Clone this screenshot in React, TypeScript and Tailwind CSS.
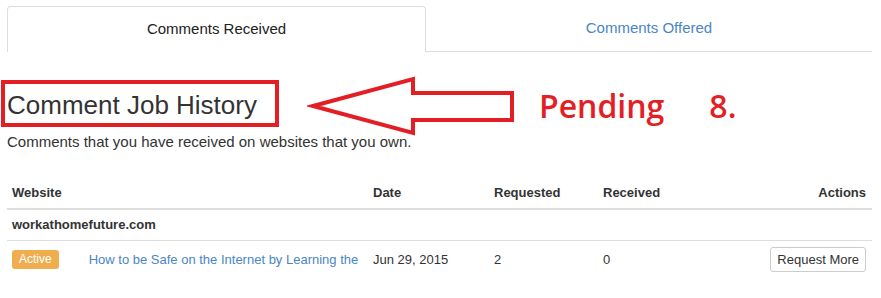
import React from "react";

const FONT = { fontFamily: '"Liberation Sans", Arial, sans-serif' };

function Tabs() {
  return (
    <div className="flex pt-[6px] text-[15px]">
      <div className="flex h-[46px] w-[419px] items-center justify-center rounded-t-[4px] border border-b-0 border-[#dddddd] bg-white text-[#222222]">
        Comments Received
      </div>
      <div className="flex h-[46px] w-[446px] items-center justify-center border-b border-[#dddddd] text-[#4a86c5]">
        Comments Offered
      </div>
    </div>
  );
}

function Annotations() {
  return (
    <>
      <div className="pointer-events-none absolute left-[-6px] top-[28px] h-[47px] w-[278px] border-[4px] border-[#e31e24]" />
      <svg
        className="pointer-events-none absolute left-[300px] top-[22px]"
        width="220"
        height="64"
        viewBox="0 0 220 64"
        fill="none"
      >
        <path
          d="M6 32 L106 5 L106 19 L205 19 L205 46 L106 46 L106 59 Z"
          stroke="#e31e24"
          strokeWidth="4"
          strokeLinejoin="miter"
        />
      </svg>
      <div
        className="absolute left-[532px] top-[34px] text-[32px] font-semibold leading-[40px] text-[#e31e24]"
        style={{ fontFamily: '"Open Sans", sans-serif' }}
      >
        Pending<span className="ml-[45px]">8.</span>
      </div>
    </>
  );
}

function HistoryTable() {
  const cols = "grid grid-cols-[361px_121px_109px_1fr_1fr]";
  return (
    <div className="mt-[26px] text-[13px] text-[#333333]">
      <div className={`${cols} border-b-2 border-[#dddddd] font-bold`}>
        <div className="px-[5px] py-[5px] leading-[20px]">Website</div>
        <div className="px-[5px] py-[5px] leading-[20px]">Date</div>
        <div className="px-[5px] py-[5px] leading-[20px]">Requested</div>
        <div className="px-[5px] py-[5px] leading-[20px]">Received</div>
        <div className="px-[6px] py-[5px] text-right leading-[20px]">Actions</div>
      </div>
      <div className="border-b border-[#dddddd] px-[5px] py-[5px] font-bold leading-[20px]">
        workathomefuture.com
      </div>
      <div className={`${cols} items-center py-[6px]`}>
        <div className="flex items-center px-[5px]">
          <span className="rounded-[3px] bg-[#f0ad4e] px-[7px] text-[12px] leading-[19px] text-white">
            Active
          </span>
          <span className="ml-[30px] whitespace-nowrap text-[#4a86c5]">
            How to be Safe on the Internet by Learning the
          </span>
        </div>
        <div className="px-[5px]">Jun 29, 2015</div>
        <div className="px-[5px]">2</div>
        <div className="px-[5px]">0</div>
        <div className="flex justify-end px-[6px]">
          <button className="h-[25px] rounded-[3px] border border-[#cccccc] bg-white px-[6px] text-[13px] text-[#333333]">
            Request More
          </button>
        </div>
      </div>
    </div>
  );
}

export default function App() {
  return (
    <div className="h-[298px] w-[881px] overflow-hidden bg-white" style={FONT}>
      <div className="ml-[7px] w-[865px]">
        <Tabs />
        <div className="relative pt-[38px]">
          <h1 className="text-[26px] font-normal leading-[30px] text-[#333333]">
            Comment Job History
          </h1>
          <p className="mt-[12px] text-[15px] leading-[20px] text-[#333333]">
            Comments that you have received on websites that you own.
          </p>
          <Annotations />
        </div>
        <HistoryTable />
      </div>
    </div>
  );
}
